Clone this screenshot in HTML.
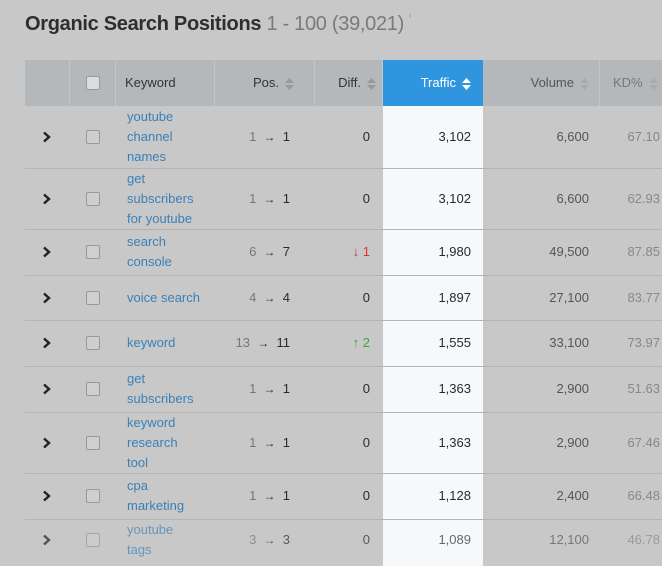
<!DOCTYPE html>
<html><head><style>
body{margin:0;width:662px;height:566px;overflow:hidden;background:#c8c8c8;font-family:"Liberation Sans",sans-serif;position:relative}
h1{position:absolute;left:25px;top:13px;margin:0;font-size:20px;font-weight:bold;color:#2e2e2e;letter-spacing:-0.3px}
h1 span{font-weight:normal;color:#7a7a7a}
.hd{position:absolute;top:60px;height:46px;background:#b5b8bb;font-size:13px;color:#333;line-height:46px;border-right:1px solid #c3c5c7;box-sizing:border-box}
.tr{position:absolute;left:383px;top:60px;width:100px;height:46px;background:#2f95df;color:#fff;font-size:13px;line-height:46px;text-align:right;padding-right:12px;box-sizing:border-box}
.tcol{position:absolute;left:383px;top:106px;width:100px;height:460px;background:#f6f9fc}
.line{position:absolute;left:25px;width:637px;height:1px;background:#b4b4b4}
.c{position:absolute;font-size:13px;color:#2a2a2a}
.k{position:absolute;left:127px;font-size:13px;color:#3a80b8;line-height:20px}
.cb{position:absolute;left:86px;width:12px;height:12px;border:1px solid #999;background:#cfcfcf;border-radius:2px}
.ch{position:absolute;left:42px;width:10px;height:12px}
.so{display:inline-block;vertical-align:middle;margin-left:6px;width:9px;height:16px}
</style></head><body>
<h1>Organic Search Positions <span>1 - 100 (39,021)</span> <span style="font-size:10px;vertical-align:top">ⁱ</span></h1>
<div class="hd" style="left:25px;width:45px"></div>
<div class="hd" style="left:70px;width:46px"><div class="cb" style="left:16px;top:16px;background:#ddd"></div></div>
<div class="hd" style="left:116px;width:99px;padding-left:9px">Keyword</div>
<div class="hd" style="left:215px;width:100px;text-align:right;padding-right:20px">Pos.<svg class="so" viewBox="0 0 9 16"><path d="M0 7L4.5 2L9 7ZM0 9L4.5 14L9 9Z" fill="#999"/></svg></div>
<div class="hd" style="left:315px;width:68px;text-align:right;padding-right:6px">Diff.<svg class="so" viewBox="0 0 9 16"><path d="M0 7L4.5 2L9 7ZM0 9L4.5 14L9 9Z" fill="#999"/></svg></div>
<div class="tr">Traffic<svg class="so" viewBox="0 0 9 16"><path d="M0 7L4.5 2L9 7ZM0 9L4.5 14L9 9Z" fill="#fff"/></svg></div>
<div class="hd" style="left:483px;width:117px;text-align:right;padding-right:10px;color:#555">Volume<svg class="so" viewBox="0 0 9 16"><path d="M0 7L4.5 2L9 7ZM0 9L4.5 14L9 9Z" fill="#aaa"/></svg></div>
<div class="hd" style="left:600px;width:62px;padding-left:13px;color:#777;border:none">KD%<svg class="so" viewBox="0 0 9 16"><path d="M0 7L4.5 2L9 7ZM0 9L4.5 14L9 9Z" fill="#aaa"/></svg></div>
<div class="tcol"></div>
<div id="rows"></div>
<script>
var R=[[106,168,["youtube","channel","names"],"1","1","0","3,102","6,600","67.10"],
[168,229,["get","subscribers","for youtube"],"1","1","0","3,102","6,600","62.93"],
[229,275,["search","console"],"6","7","d1","1,980","49,500","87.85"],
[275,320,["voice search"],"4","4","0","1,897","27,100","83.77"],
[320,366,["keyword"],"13","11","u2","1,555","33,100","73.97"],
[366,412,["get","subscribers"],"1","1","0","1,363","2,900","51.63"],
[412,473,["keyword","research","tool"],"1","1","0","1,363","2,900","67.46"],
[473,519,["cpa","marketing"],"1","1","0","1,128","2,400","66.48"],
[519,561,["youtube","tags"],"3","3","0","1,089","12,100","46.78"]];
var h="";
R.forEach(function(r,i){var mid=(r[0]+r[1])/2;
var op=i==8?"opacity:.7;":"";
h+='<div style="'+op+'">';
h+='<svg class="ch" style="top:'+(mid-6)+'px" viewBox="0 0 10 12"><path d="M2 1.5L7 6L2 10.5" stroke="#222" stroke-width="2.4" fill="none"/></svg>';
h+='<div class="cb" style="top:'+(mid-7)+'px"></div>';
h+='<div class="k" style="top:'+(mid-r[2].length*10)+'px">'+r[2].join("<br>")+'</div>';
h+='<div class="c" style="left:215px;width:75px;text-align:right;top:'+(mid-8)+'px"><span style="color:#777">'+r[3]+'</span> &nbsp;<span style="font-size:12px">→</span>&nbsp; '+r[4]+'</div>';
var d=r[5]=="d1"?'<span style="color:#d33">↓ 1</span>':r[5]=="u2"?'<span style="color:#3a3">↑ 2</span>':'0';
h+='<div class="c" style="left:315px;width:55px;text-align:right;top:'+(mid-8)+'px">'+d+'</div>';
h+='<div class="c" style="left:383px;width:88px;text-align:right;top:'+(mid-8)+'px">'+r[6]+'</div>';
h+='<div class="c" style="left:483px;width:106px;text-align:right;color:#555;top:'+(mid-8)+'px">'+r[7]+'</div>';
h+='<div class="c" style="left:600px;width:60px;text-align:right;color:#888;top:'+(mid-8)+'px">'+r[8]+'</div>';
h+='</div>';
if(i<8)h+='<div class="line" style="top:'+r[1]+'px"></div>';});
document.getElementById("rows").innerHTML=h;
</script>
</body></html>
